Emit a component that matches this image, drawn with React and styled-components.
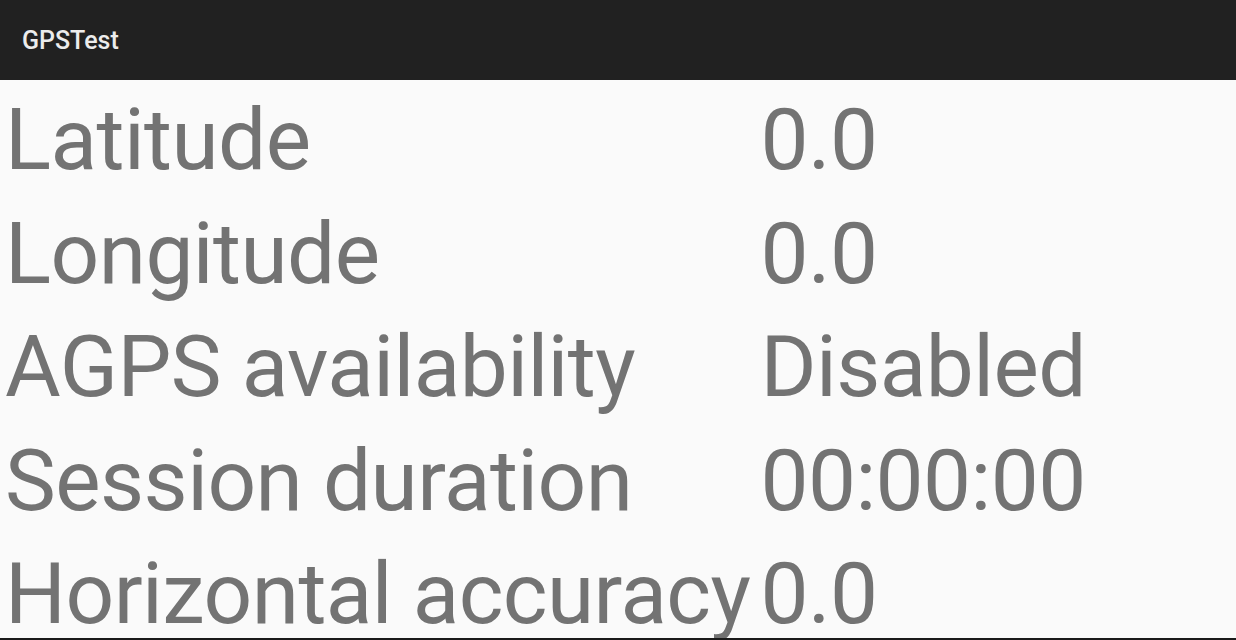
import React from 'react';
import styled, { createGlobalStyle } from 'styled-components';

const GlobalStyle = createGlobalStyle`
  html, body {
    margin: 0;
    padding: 0;
    background: #fafafa;
    font-family: Roboto, "Noto Sans", sans-serif;
  }
`;

const Screen = styled.div`
  width: 1236px;
  height: 640px;
  display: flex;
  flex-direction: column;
  overflow: hidden;
  background: #fafafa;
  border-bottom: 2px solid #1a1a1a;
  box-sizing: border-box;
`;

const Toolbar = styled.div`
  height: 80px;
  flex-shrink: 0;
  display: flex;
  align-items: center;
  padding-left: 22px;
  background: #212121;
`;

const Title = styled.h1`
  margin: 0;
  color: #ececec;
  font-size: 25px;
  font-weight: 500;
  letter-spacing: 0;
`;

const Table = styled.div`
  display: grid;
  grid-template-columns: auto 1fr;
  column-gap: 10px;
  padding: 4px 0 0 5px;
`;

const Cell = styled.div`
  font-size: 85.5px;
  line-height: 113.5px;
  letter-spacing: -0.55px;
  color: #737373;
  white-space: nowrap;
`;

const rows = [
  ['Latitude', '0.0'],
  ['Longitude', '0.0'],
  ['AGPS availability', 'Disabled'],
  ['Session duration', '00:00:00'],
  ['Horizontal accuracy', '0.0'],
];

const App = () => {
  return (
    <Screen>
      <GlobalStyle />
      <Toolbar>
        <Title>GPSTest</Title>
      </Toolbar>
      <Table>
        {rows.map(([label, value]) => (
          <React.Fragment key={label}>
            <Cell>{label}</Cell>
            <Cell>{value}</Cell>
          </React.Fragment>
        ))}
      </Table>
    </Screen>
  );
};

export default App;
